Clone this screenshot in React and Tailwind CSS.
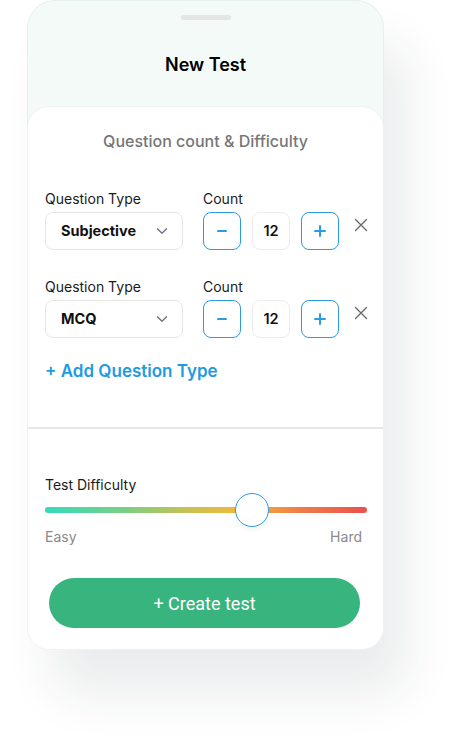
function Chevron() {
  return (
    <svg width="12" height="8" viewBox="0 0 12 8" fill="none" stroke="#6b7280" strokeWidth="1.3" strokeLinecap="round" strokeLinejoin="round">
      <path d="M1.5 1.8 6 6.2l4.5-4.4" />
    </svg>
  );
}

function CloseIcon() {
  return (
    <svg width="14" height="14" viewBox="0 0 14 14" fill="none" stroke="#6b6b6b" strokeWidth="1.4" strokeLinecap="round">
      <path d="M1.5 1.5l11 11M12.5 1.5l-11 11" />
    </svg>
  );
}

function QuestionRow({ type, count }) {
  return (
    <div className="flex items-end">
      <div className="w-[138px] shrink-0">
        <p className="text-[14px] leading-[20px] text-[#1a1a1a]">Question Type</p>
        <div className="mt-[3px] h-[38px] flex items-center justify-between pl-[15px] pr-[14px] rounded-[8px] border border-[#e6e6e6] bg-white">
          <span className="text-[14.5px] font-bold text-[#111]">{type}</span>
          <Chevron />
        </div>
      </div>
      <div className="ml-[20px] shrink-0">
        <p className="text-[14px] leading-[20px] text-[#1a1a1a]">Count</p>
        <div className="mt-[3px] flex items-center gap-[11px]">
          <button className="w-[38px] h-[38px] rounded-[8px] border border-[#2c9be0] flex items-center justify-center">
            <span className="block w-[10px] h-[2px] bg-[#2c9be0] rounded"></span>
          </button>
          <div className="w-[38px] h-[38px] rounded-[8px] border border-[#ececec] flex items-center justify-center text-[14.5px] font-semibold text-[#111]">
            {count}
          </div>
          <button className="w-[38px] h-[38px] rounded-[8px] border border-[#2c9be0] flex items-center justify-center">
            <svg width="12" height="12" viewBox="0 0 12 12" stroke="#2c9be0" strokeWidth="2" strokeLinecap="round">
              <path d="M6 1v10M1 6h10" />
            </svg>
          </button>
        </div>
      </div>
      <div className="ml-[15px] shrink-0 h-[38px] flex items-center mb-[6px]">
        <CloseIcon />
      </div>
    </div>
  );
}

export default function App() {
  return (
    <div className="min-h-[740px] bg-white pl-[27px] font-['Inter','Noto_Sans',sans-serif]">
      <div className="w-[357px] rounded-[28px] border border-[#e4f1ec] bg-[#f3faf8] shadow-[24px_44px_50px_rgba(30,40,60,0.09)]">
        {/* Header */}
        <div className="h-[105px] flex flex-col items-center">
          <div className="mt-[14px] w-[50px] h-[5px] rounded-full bg-[#e4e6e6]"></div>
          <h1 className="mt-[33px] text-[18px] leading-[24px] font-semibold text-black">New Test</h1>
        </div>

        {/* Card */}
        <div className="-mx-px -mb-px bg-white rounded-[22px] border border-[#eef3f1]">
          <h2 className="pt-[23px] text-center text-[16px] leading-[22px] font-medium text-[#767676]">Question count &amp; Difficulty</h2>
          <div className="pl-[17px] pr-[13px]">
            <div className="mt-[37px] flex flex-col gap-[27px]">
              <QuestionRow type="Subjective" count={12} />
              <QuestionRow type="MCQ" count={12} />
            </div>
            <p className="mt-[21px] text-[17px] leading-[24px] font-semibold text-[#1f9be1]">+ Add Question Type</p>
          </div>

          <div className="mt-[44px] h-[2px] bg-[#e8e8e8]"></div>

          <div className="pt-[46px] pl-[17px] pr-[16px]">
            <p className="text-[14px] leading-[20px] text-[#1a1a1a]">Test Difficulty</p>
            <div className="relative mt-[12px] h-[6px] rounded-full bg-[linear-gradient(90deg,#33dbbb_0%,#7bcf84_25%,#d3bf4a_48%,#f2b93c_62%,#ef7f47_78%,#e9504f_100%)]">
              <div className="absolute left-[190px] top-1/2 -translate-y-1/2 w-[34px] h-[34px] rounded-full bg-white border-[1.5px] border-[#2c9be0] shadow-[0_2px_6px_rgba(0,0,0,0.06)]"></div>
            </div>
            <div className="mt-[14px] pr-[5px] flex justify-between text-[14px] leading-[20px] text-[#8a8a8a]">
              <span>Easy</span>
              <span>Hard</span>
            </div>
          </div>

          <div className="pt-[31px] pb-[21px] pl-[21px] pr-[23px]">
            <button className="w-full h-[50px] rounded-full bg-[#38b47f] text-white text-[18px] font-['Roboto',sans-serif]">
              + Create test
            </button>
          </div>
        </div>
      </div>
    </div>
  );
}
